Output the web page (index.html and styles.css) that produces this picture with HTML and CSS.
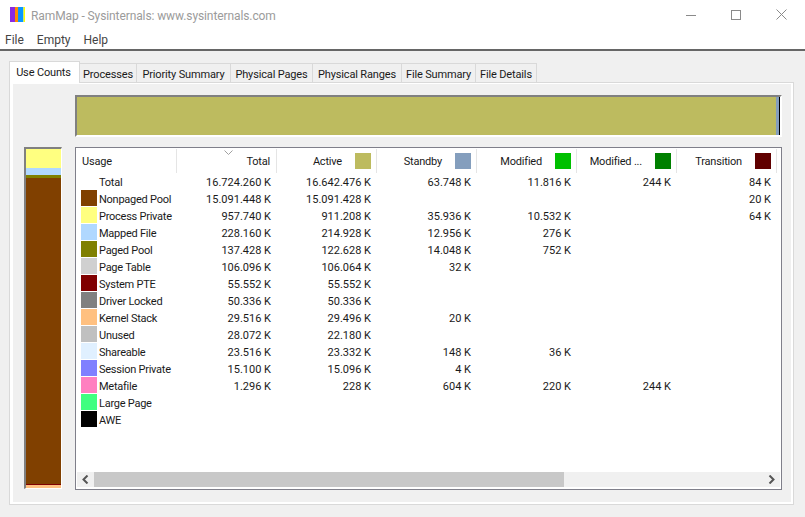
FILE: index.html
```html
<!DOCTYPE html>
<html lang="en">
<head>
<meta charset="utf-8">
<title>RamMap - Sysinternals: www.sysinternals.com</title>
<link rel="stylesheet" href="styles.css">
</head>
<body>
<div class="app">
  <header class="titlebar">
    <svg class="appicon" width="15" height="15" viewBox="0 0 15 15"><rect width="5" height="15" fill="#8a2be2"/><rect x="5" width="3" height="15" fill="#ff8c00"/><rect x="8" width="5.5" height="15" fill="#0a96ff"/><rect x="13.5" width="1.5" height="15" fill="#ffff00"/></svg>
    <span class="title">RamMap - Sysinternals: www.sysinternals.com</span>
    <div class="winctl">
      <svg width="10" height="10" viewBox="0 0 10 10"><path d="M0 5.5H10" stroke="#8a8a8a" fill="none"/></svg>
      <svg width="10" height="10" viewBox="0 0 10 10"><rect x=".5" y=".5" width="9" height="9" stroke="#8a8a8a" fill="none"/></svg>
      <svg width="11" height="11" viewBox="0 0 11 11"><path d="M.5 .5L10.5 10.5M10.5 .5L.5 10.5" stroke="#8a8a8a" fill="none"/></svg>
    </div>
  </header>
  <nav class="menu"><span>File</span><span>Empty</span><span>Help</span></nav>
  <main class="client">
    <div class="tabs">
      <div class="tab active t0">Use Counts</div>
      <div class="tab t1">Processes</div>
      <div class="tab t2">Priority Summary</div>
      <div class="tab t3">Physical Pages</div>
      <div class="tab t4">Physical Ranges</div>
      <div class="tab t5">File Summary</div>
      <div class="tab t6">File Details</div>
    </div>
    <section class="panel">
      <div class="inner">
        <div class="spacer"></div>
        <div class="hbar"><div class="h-active"></div><div class="h-standby"></div><div class="h-black"></div></div>
        <div class="vbar">
          <div class="v1"></div><div class="v2"></div><div class="v3"></div><div class="v4"></div><div class="v5"></div><div class="v6"></div>
        </div>
        <div class="list">
          <div class="row head">
            <div class="hc usage">Usage</div>
            <div class="hc total"><svg class="sort" width="9" height="5" viewBox="0 0 9 5"><path d="M.5 .5L4.5 4.5L8.5 .5" stroke="#a0a0a0" fill="none"/></svg>Total</div>
            <div class="hc">Active<i class="sw c-active"></i></div>
            <div class="hc">Standby<i class="sw c-standby"></i></div>
            <div class="hc">Modified<i class="sw c-modified"></i></div>
            <div class="hc">Modified ...<i class="sw c-nowrite"></i></div>
            <div class="hc">Transition<i class="sw c-transition"></i></div>
          </div>
          <div class="rows">
            <div class="row"><div class="name"><i class="sw none"></i>Total</div><div>16.724.260 K</div><div>16.642.476 K</div><div>63.748 K</div><div>11.816 K</div><div>244 K</div><div>84 K</div></div>
            <div class="row"><div class="name"><i class="sw u1"></i>Nonpaged Pool</div><div>15.091.448 K</div><div>15.091.428 K</div><div></div><div></div><div></div><div>20 K</div></div>
            <div class="row"><div class="name"><i class="sw u2"></i>Process Private</div><div>957.740 K</div><div>911.208 K</div><div>35.936 K</div><div>10.532 K</div><div></div><div>64 K</div></div>
            <div class="row"><div class="name"><i class="sw u3"></i>Mapped File</div><div>228.160 K</div><div>214.928 K</div><div>12.956 K</div><div>276 K</div><div></div><div></div></div>
            <div class="row"><div class="name"><i class="sw u4"></i>Paged Pool</div><div>137.428 K</div><div>122.628 K</div><div>14.048 K</div><div>752 K</div><div></div><div></div></div>
            <div class="row"><div class="name"><i class="sw u5"></i>Page Table</div><div>106.096 K</div><div>106.064 K</div><div>32 K</div><div></div><div></div><div></div></div>
            <div class="row"><div class="name"><i class="sw u6"></i>System PTE</div><div>55.552 K</div><div>55.552 K</div><div></div><div></div><div></div><div></div></div>
            <div class="row"><div class="name"><i class="sw u7"></i>Driver Locked</div><div>50.336 K</div><div>50.336 K</div><div></div><div></div><div></div><div></div></div>
            <div class="row"><div class="name"><i class="sw u8"></i>Kernel Stack</div><div>29.516 K</div><div>29.496 K</div><div>20 K</div><div></div><div></div><div></div></div>
            <div class="row"><div class="name"><i class="sw u9"></i>Unused</div><div>28.072 K</div><div>22.180 K</div><div></div><div></div><div></div><div></div></div>
            <div class="row"><div class="name"><i class="sw u10"></i>Shareable</div><div>23.516 K</div><div>23.332 K</div><div>148 K</div><div>36 K</div><div></div><div></div></div>
            <div class="row"><div class="name"><i class="sw u11"></i>Session Private</div><div>15.100 K</div><div>15.096 K</div><div>4 K</div><div></div><div></div><div></div></div>
            <div class="row"><div class="name"><i class="sw u12"></i>Metafile</div><div>1.296 K</div><div>228 K</div><div>604 K</div><div>220 K</div><div>244 K</div><div></div></div>
            <div class="row"><div class="name"><i class="sw u13"></i>Large Page</div><div></div><div></div><div></div><div></div><div></div><div></div></div>
            <div class="row"><div class="name"><i class="sw u14"></i>AWE</div><div></div><div></div><div></div><div></div><div></div><div></div></div>
          </div>
          <div class="scrollbar">
            <div class="sbtn"><svg width="7" height="9" viewBox="0 0 7 9"><path d="M5.5 .5L1.5 4.5L5.5 8.5" stroke="#555" stroke-width="2" fill="none"/></svg></div>
            <div class="thumb"></div>
            <div class="track"></div>
            <div class="sbtn"><svg width="7" height="9" viewBox="0 0 7 9"><path d="M1.5 .5L5.5 4.5L1.5 8.5" stroke="#555" stroke-width="2" fill="none"/></svg></div>
          </div>
        </div>
      </div>
    </section>
  </main>
</div>
</body>
</html>
```
FILE: styles.css
```css
* { box-sizing: border-box; }
html, body { margin: 0; padding: 0; }
body {
  width: 805px; height: 517px; overflow: hidden;
  background: #f0f0f0;
  font-family: Roboto, "Open Sans", sans-serif;
  font-size: 11px; color: #1a1a1a;
}
.app { display: flex; flex-direction: column; height: 517px; }
.titlebar { display: flex; align-items: center; height: 30px; background: #fff; padding-left: 10px; }
.appicon { flex: none; margin-right: 6px; margin-bottom: 1px; }
.title { color: #9b9b9b; font-size: 12px; letter-spacing: -0.1px; padding-top: 2px; }
.winctl { margin-left: auto; display: flex; align-items: center; gap: 35px; padding-right: 18px; }
.menu { display: flex; height: 22px; background: #fff; align-items: center; padding: 2px 0 0 5px; gap: 13px; font-size: 12px; color: #444; border-bottom: 2px solid #666; border-image: linear-gradient(#aaa 50%, #666 50%) 2; }
.client { flex: 1; padding: 10px 11px 12px 9px; display: flex; flex-direction: column; }
.tabs { display: flex; height: 21px; align-items: flex-end; position: relative; z-index: 1; }
.tab { height: 19px; padding-top: 2px; letter-spacing: -0.15px; border: 1px solid #d9d9d9; border-left: 0; border-bottom: 0; background: #f0f0f0; display: flex; align-items: center; justify-content: center; }
.tab.active { height: 22px; margin-bottom: -1px; background: #fff; border-left: 1px solid #d9d9d9; padding: 0 2px 1px 0; }
.t0 { width: 71px; } .t1 { width: 57px; } .t2 { width: 94px; } .t3 { width: 82px; } .t4 { width: 89px; } .t5 { width: 74px; } .t6 { width: 61px; }
.panel { flex: 1; border: 1px solid #d9d9d9; background: #fff; padding: 1px 2px 2px 3px; display: flex; }
.inner { flex: 1; background: #f0f0f0; padding: 11px 9px 12px 11px; display: grid; grid-template-columns: 38px 707px; grid-template-rows: 42px 343px; column-gap: 13px; row-gap: 10px; }
.hbar { display: flex; border-top: 2px solid #808080; border-left: 2px solid #808080; border-bottom: 2px solid #fff; border-right: 2px solid #fff; }
.h-active { flex: 1; background: #bdbb5f; }
.h-standby { width: 3px; background: #849ebd; }
.h-black { width: 1px; background: #000; }
.vbar { display: flex; flex-direction: column; border-top: 2px solid #808080; border-left: 2px solid #808080; border-right: 1px solid #fff; border-bottom: 1px solid #fff; height: 342px; }
.v1 { height: 19px; background: #ffff80; }
.v2 { height: 7px; background: #b0d8ff; }
.v3 { height: 3px; background: #808000; }
.v4 { flex: 1; background: #804000; }
.v5 { height: 1px; background: #800000; }
.v6 { height: 3px; background: #ffc080; }
.list { border: 1px solid #7f7f8a; background: #fff; padding: 1px; display: flex; flex-direction: column; }
.row { display: grid; grid-template-columns: repeat(7, 100px); grid-template-rows: 17px; height: 17px; line-height: 19px; text-align: right; }
.row > div { padding-right: 6px; white-space: nowrap; }
.row > .name { display: flex; align-items: flex-start; text-align: left; padding: 0 0 0 4px; letter-spacing: -0.25px; }
.row.head { height: 24px; line-height: 26px; grid-template-rows: 24px; letter-spacing: -0.2px; }
.row > .hc { display: flex; align-items: flex-start; justify-content: flex-end; gap: 13px; padding-right: 5px; border-right: 1px solid #e5e5e5; position: relative; }
.hc > .sw { margin-top: 4px; }
.row > .usage { justify-content: flex-start; padding: 0 0 0 5px; }
.row > .total { padding-right: 6px; }
.sort { position: absolute; left: 47px; top: 1px; }
.sw { display: block; width: 16px; height: 16px; flex: none; }
.name .sw { margin-right: 2px; }
.none { background: transparent; }
.rows { flex: 1; }
.c-active { background: #bdbb5f; } .c-standby { background: #849ebd; } .c-modified { background: #00c000; } .c-nowrite { background: #008000; } .c-transition { background: #600000; }
.u1 { background: #804000; } .u2 { background: #ffff80; } .u3 { background: #b0d8ff; } .u4 { background: #808000; } .u5 { background: #d0d0d0; } .u6 { background: #800000; } .u7 { background: #808080; } .u8 { background: #ffc080; } .u9 { background: #c0c0c0; } .u10 { background: #e0f0ff; } .u11 { background: #8080ff; } .u12 { background: #ff80c0; } .u13 { background: #40ff80; } .u14 { background: #000; }
.scrollbar { display: flex; height: 15px; margin-bottom: 1px; background: #f0f0f0; }
.sbtn { width: 17px; display: flex; align-items: center; justify-content: center; }
.thumb { width: 470px; background: #c8c8c8; }
.track { flex: 1; }
```
